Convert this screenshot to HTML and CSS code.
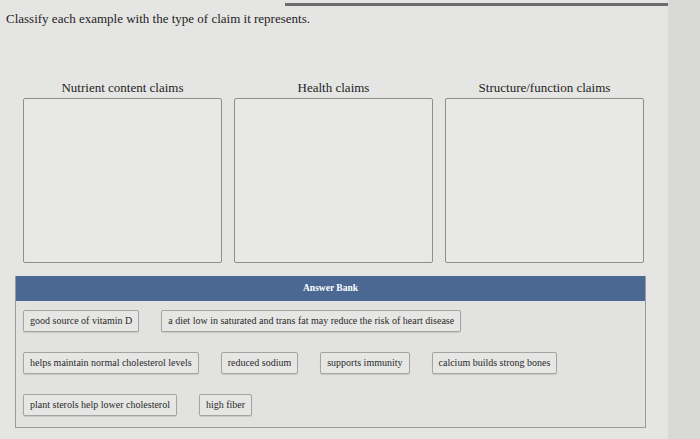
FILE: index.html
```html
<!DOCTYPE html>
<html lang="en">
<head>
<meta charset="utf-8">
<title>Classify claims</title>
<link rel="stylesheet" href="styles.css">
</head>
<body>
<div class="page">
    <div class="topline"></div>
    <p class="prompt">Classify each example with the type of claim it represents.</p>

    <div class="targets">
        <div class="target">
            <div class="target-label">Nutrient content claims</div>
            <div class="drop"></div>
        </div>
        <div class="target">
            <div class="target-label">Health claims</div>
            <div class="drop"></div>
        </div>
        <div class="target">
            <div class="target-label">Structure/function claims</div>
            <div class="drop"></div>
        </div>
    </div>

    <div class="bank">
        <div class="bank-head">Answer Bank</div>
        <div class="bank-body">
            <div class="chip-row">
                <span class="chip">good source of vitamin D</span>
                <span class="chip">a diet low in saturated and trans fat may reduce the risk of heart disease</span>
            </div>
            <div class="chip-row">
                <span class="chip">helps maintain normal cholesterol levels</span>
                <span class="chip">reduced sodium</span>
                <span class="chip">supports immunity</span>
                <span class="chip">calcium builds strong bones</span>
            </div>
            <div class="chip-row">
                <span class="chip">plant sterols help lower cholesterol</span>
                <span class="chip">high fiber</span>
            </div>
        </div>
    </div>
</div>
</body>
</html>
```

FILE: styles.css
```css
html, body {
    margin: 0;
    padding: 0;
    background: #d9d9d7;
    font-family: "Liberation Serif", "Times New Roman", serif;
    color: #222;
}
.page {
    width: 668px;
    height: 439px;
    background: #e5e5e3;
    overflow: hidden;
}
.topline {
    margin: 3px 0 0 285px;
    height: 3px;
    background: #6c6c6c;
}
.prompt {
    margin: 4px 0 0 6px;
    font-size: 13px;
    line-height: 18px;
    color: #1e1e1e;
}
.targets {
    display: flex;
    gap: 12px;
    margin: 52px 0 0 23px;
}
.target {
    width: 199px;
}
.target-label {
    text-align: center;
    font-size: 13px;
    line-height: 16px;
    color: #1e1e1e;
}
.drop {
    margin-top: 2px;
    height: 163px;
    border: 1px solid #8e8e8e;
    border-radius: 2px;
    background: #e8e8e6;
}
.bank {
    margin: 13px 0 0 15px;
    width: 629px;
    border: 1px solid #9a9a9a;
    border-top: none;
    background: #e2e2e0;
}
.bank-head {
    background: #4a6891;
    color: #fff;
    font-weight: bold;
    font-size: 9.5px;
    line-height: 25px;
    text-align: center;
}
.bank-body {
    padding: 9px 7px 11px;
    display: flex;
    flex-direction: column;
    gap: 20px;
}
.chip-row {
    display: flex;
    gap: 22px;
}
.chip {
    font-size: 10px;
    line-height: 20px;
    padding: 0 6px;
    border: 1px solid #a4a4a4;
    border-radius: 2px;
    background: #e6e6e4;
    color: #2a2a2a;
    box-shadow: 0 1px 1px rgba(0,0,0,0.12);
    white-space: nowrap;
}
```
